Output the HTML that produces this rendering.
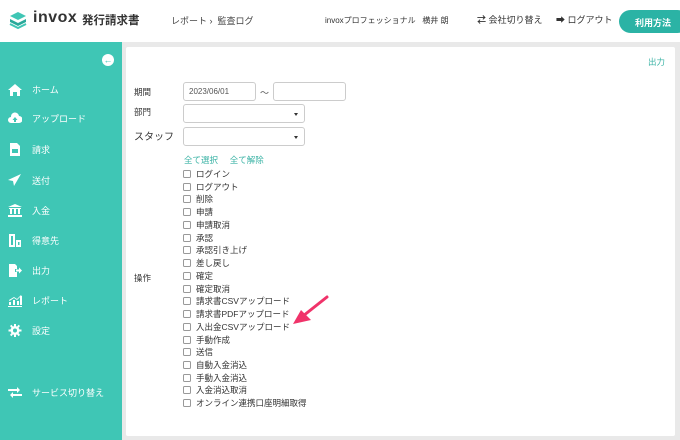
<!DOCTYPE html><html><head><meta charset="utf-8"><style>
*{margin:0;padding:0;box-sizing:border-box}
body{width:680px;height:440px;overflow:hidden;background:#e9e9e9;font-family:"Liberation Sans","Noto Sans CJK JP",sans-serif;color:#333;position:relative}
.hdr{position:absolute;left:0;top:0;width:680px;height:42px;background:#fff}
.abs{position:absolute;white-space:nowrap}
.side{position:absolute;left:0;top:42px;width:122px;height:398px;background:#3fc6b5}
.side .it{position:absolute;left:8px;font-size:9px;color:#fff;display:flex;align-items:center}
.side svg{width:14px;height:13px;margin-right:10px;fill:#fff}
.card{position:absolute;left:126px;top:47px;width:549px;height:389px;background:#fff;border-radius:2px}
.inp{position:absolute;height:19px;border:1px solid #ccc;border-radius:3px;background:#fff;font-size:8px;color:#555;padding:4px 5px}
.cb{position:absolute;left:183px;font-size:8.5px;color:#333;display:flex;align-items:center;height:12px}
.cb i{width:8px;height:8px;border:1px solid #999;border-radius:1.5px;margin-right:5px;display:inline-block}
.lbl{position:absolute;font-size:8.5px;color:#333}
.car{position:absolute;right:6px;top:8px;border-left:2.5px solid transparent;border-right:2.5px solid transparent;border-top:3px solid #333}
</style></head><body>
<div class="hdr"></div>
<svg class="abs" style="left:8px;top:10px" width="20" height="20" viewBox="0 0 20 20"><path d="M10 2 L18 6 L10 10 L2 6Z" fill="#3fc6b5"/><path d="M2 9 L10 13 L18 9 L18 12 L10 16 L2 12Z" fill="#2aa99a"/><path d="M2 14 L10 18 L18 14" stroke="#3fc6b5" stroke-width="2" fill="none"/></svg>
<div class="abs" style="left:33px;top:9px;font-size:16px;font-weight:bold;letter-spacing:0.5px;color:#333">invox</div>
<div class="abs" style="left:82px;top:12px;font-size:11.5px;font-weight:bold;color:#333">発行請求書</div>
<div class="abs" style="left:171px;top:14px;font-size:9px;color:#444">レポート ›&nbsp; 監査ログ</div>
<div class="abs" style="left:325px;top:15px;font-size:8px;color:#333">invoxプロフェッショナル&nbsp;&nbsp; 横井 朗</div>
<div class="abs" style="left:477px;top:13px;font-size:9px;color:#333"><b>⇄</b> 会社切り替え</div>
<div class="abs" style="left:556px;top:13px;font-size:9px;color:#333"><b>➡</b> ログアウト</div>
<div class="abs" style="left:619px;top:10px;width:70px;height:23px;background:#2bb3a5;border-radius:12px;color:#fff;font-size:9px;font-weight:bold;padding:6px 0 0 16px">利用方法</div>
<div class="side">
<div class="abs" style="left:102px;top:12px;width:12px;height:12px;border-radius:6px;background:#fff;color:#3fc6b5;font-size:9px;line-height:12px;text-align:center;font-weight:bold">←</div>
<div class="it" style="top:41px"><svg viewBox="0 0 14 13"><path d="M7 1 L14 7 L12 7 L12 13 L9 13 L9 9 L5 9 L5 13 L2 13 L2 7 L0 7Z"/></svg>ホーム</div>
<div class="it" style="top:70px"><svg viewBox="0 0 14 13"><path d="M3 11 A3 3 0 0 1 3 5 A4 4 0 0 1 11 4 A3.5 3.5 0 0 1 11 11Z"/><path d="M7 5 L4.5 8 L6 8 L6 10 L8 10 L8 8 L9.5 8Z" fill="#3fc6b5"/></svg>アップロード</div>
<div class="it" style="top:101px"><svg viewBox="0 0 14 13"><path d="M2 0 L9 0 L12 3 L12 13 L2 13Z"/><rect x="4" y="6" width="6" height="4" fill="#3fc6b5"/></svg>請求</div>
<div class="it" style="top:132px"><svg viewBox="0 0 14 13"><path d="M13 0 L0 6 L5 7 L6 12Z"/></svg>送付</div>
<div class="it" style="top:162px"><svg viewBox="0 0 14 13"><path d="M7 0 L14 3 L0 3Z M1 4 H13 V5 H1Z M2 5 H4 V10 H2Z M6 5 H8 V10 H6Z M10 5 H12 V10 H10Z M0 11 H14 V13 H0Z"/></svg>入金</div>
<div class="it" style="top:192px"><svg viewBox="0 0 14 13"><path d="M1 0 H7 V13 H1Z M8 6 H13 V13 H8Z"/><rect x="3" y="2" width="2" height="9" fill="#3fc6b5"/><rect x="10" y="8" width="1.5" height="3" fill="#3fc6b5"/></svg>得意先</div>
<div class="it" style="top:222px"><svg viewBox="0 0 14 13"><path d="M1 0 H7 L9 2 V5 H7 V8 H9 V13 H1Z M8 5.5 H11 V3.5 L14 6.5 L11 9.5 V7.5 H8Z"/></svg>出力</div>
<div class="it" style="top:252px"><svg viewBox="0 0 14 13"><path d="M0 12 H14 V13 H0Z M1 8 H3 V11 H1Z M5 6 H7 V11 H5Z M9 7 H11 V11 H9Z M12 2 H14 V11 H12Z M1 6 L6 3 L9 5 L13 1 L13.5 1.5 L9 6 L6 4 L1.5 7Z"/></svg>レポート</div>
<div class="it" style="top:282px"><svg viewBox="0 0 14 13"><circle cx="7" cy="6.5" r="4.5"/><path d="M6 0 H8 V13 H6Z M0.5 5.5 H13.5 V7.5 H0.5Z" /><path d="M2 2 L3.4 0.7 L12 10.9 L10.6 12.2Z M10.6 0.7 L12 2 L3.4 12.2 L2 10.9Z"/><circle cx="7" cy="6.5" r="2" fill="#3fc6b5"/></svg>設定</div>
<div class="it" style="top:344px"><svg viewBox="0 0 14 13"><path d="M0 3 H9 V1 L12 4 L9 7 V5 H0Z M14 8 H5 V6 L2 9 L5 12 V10 H14Z"/></svg>サービス切り替え</div>
</div>
<div class="card"></div>
<div class="abs" style="left:648px;top:56px;font-size:8.5px;color:#3bb3a5">出力</div>
<div class="lbl" style="left:134px;top:86px">期間</div>
<div class="inp" style="left:183px;top:82px;width:73px">2023/06/01</div>
<div class="abs" style="left:260px;top:86px;font-size:9px;color:#555">～</div>
<div class="inp" style="left:273px;top:82px;width:73px"></div>
<div class="lbl" style="left:134px;top:106px">部門</div>
<div class="inp" style="left:183px;top:104px;width:122px"><span class="car"></span></div>
<div class="lbl" style="left:134px;top:128px;font-size:10px">スタッフ</div>
<div class="inp" style="left:183px;top:127px;width:122px"><span class="car"></span></div>
<div class="abs" style="left:184px;top:154px;font-size:8.5px;color:#3bb3a5">全て選択&nbsp;&nbsp;&nbsp;&nbsp; 全て解除</div>
<div class="lbl" style="left:134px;top:272px">操作</div>
<div class="cb" style="top:168px"><i></i>ログイン</div>
<div class="cb" style="top:181px"><i></i>ログアウト</div>
<div class="cb" style="top:193px"><i></i>削除</div>
<div class="cb" style="top:206px"><i></i>申請</div>
<div class="cb" style="top:219px"><i></i>申請取消</div>
<div class="cb" style="top:232px"><i></i>承認</div>
<div class="cb" style="top:244px"><i></i>承認引き上げ</div>
<div class="cb" style="top:257px"><i></i>差し戻し</div>
<div class="cb" style="top:270px"><i></i>確定</div>
<div class="cb" style="top:283px"><i></i>確定取消</div>
<div class="cb" style="top:295px"><i></i>請求書CSVアップロード</div>
<div class="cb" style="top:308px"><i></i>請求書PDFアップロード</div>
<div class="cb" style="top:321px"><i></i>入出金CSVアップロード</div>
<div class="cb" style="top:334px"><i></i>手動作成</div>
<div class="cb" style="top:346px"><i></i>送信</div>
<div class="cb" style="top:359px"><i></i>自動入金消込</div>
<div class="cb" style="top:372px"><i></i>手動入金消込</div>
<div class="cb" style="top:384px"><i></i>入金消込取消</div>
<div class="cb" style="top:397px"><i></i>オンライン連携口座明細取得</div>
<svg class="abs" style="left:285px;top:290px" width="50" height="40" viewBox="0 0 50 40"><path d="M42 7 L18 26" stroke="#f0336a" stroke-width="3" stroke-linecap="round"/><path d="M8 34 L16 20 L26 30Z" fill="#f0336a"/></svg>
</body></html>
